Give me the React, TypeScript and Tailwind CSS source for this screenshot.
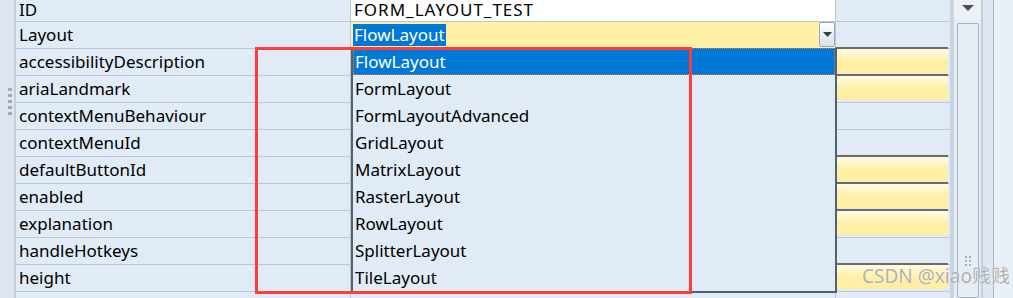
const props: { name: string; extra: "yellow" | "blue" | "none" }[] = [
  { name: "ID", extra: "blue" },
  { name: "Layout", extra: "blue" },
  { name: "accessibilityDescription", extra: "yellow" },
  { name: "ariaLandmark", extra: "yellow" },
  { name: "contextMenuBehaviour", extra: "blue" },
  { name: "contextMenuId", extra: "blue" },
  { name: "defaultButtonId", extra: "yellow" },
  { name: "enabled", extra: "yellow" },
  { name: "explanation", extra: "yellow" },
  { name: "handleHotkeys", extra: "blue" },
  { name: "height", extra: "yellow" },
  { name: "", extra: "blue" },
];

const layouts = [
  "FlowLayout",
  "FormLayout",
  "FormLayoutAdvanced",
  "GridLayout",
  "MatrixLayout",
  "RasterLayout",
  "RowLayout",
  "SplitterLayout",
  "TileLayout",
];

function ValueCell({ index }: { index: number }) {
  if (index === 0) {
    return (
      <div className="w-[485px] h-full bg-white border-l border-[#b9c7d4] pl-[3px] pt-[4px] flex items-center tracking-[1px]">
        FORM_LAYOUT_TEST
      </div>
    );
  }
  if (index === 1) {
    return (
      <div className="w-[485px] h-full bg-[#fff0a6] border-l border-[#b9c7d4] pl-[2px] flex items-center justify-between">
        <span className="bg-[#0078d7] text-white px-[1px] leading-[22px]">FlowLayout</span>
        <div className="w-[16px] h-[25px] mt-[-1px] border border-[#9aa8b8] rounded-[2px] bg-gradient-to-b from-white to-[#d8e0ea] flex items-center justify-center">
          <svg width="9" height="6" viewBox="0 0 9 6">
            <path d="M0 0 H9 L4.5 5 Z" fill="#2f3d4d" />
          </svg>
        </div>
      </div>
    );
  }
  return <div className="w-[485px] h-full border-l border-[#b9c7d4]" />;
}

function ExtraCell({ kind }: { kind: "yellow" | "blue" | "none" }) {
  if (kind === "yellow") {
    return (
      <div className="w-[113px] h-full border-l border-[#b9c7d4] border-t-2 border-t-[#6b6b6b] mt-[-2px] bg-gradient-to-b from-[#fffbe2] via-[#fff0a8] to-[#ffeea0]" />
    );
  }
  return <div className="w-[113px] h-full border-l border-[#b9c7d4]" />;
}

export default function App() {
  return (
    <div
      className="relative w-[1013px] h-[298px] overflow-hidden bg-[#e0ebf5] text-[17px] text-black flex"
      style={{ fontFamily: '"Segoe UI", "Noto Sans", "Open Sans", sans-serif' }}
    >
      {/* left gutter */}
      <div className="w-[16px] h-full bg-[#dde6ef] border-r-2 border-[#c3cfdb] flex flex-col items-center pt-[88px] gap-[3px] pl-[6px]">
        {[0, 1, 2, 3, 4].map((i) => (
          <div key={i} className="w-[4px] h-[3px] bg-[#9ba7b3] rounded-[1px]" />
        ))}
      </div>

      {/* grid */}
      <div className="w-[934px] h-full flex flex-col mt-[-5px]">
        {props.map((p, i) => (
          <div key={i} className="h-[27px] shrink-0 flex border-b border-[#b9c7d4]">
            <div className={"w-[334px] h-full pl-[3px] flex items-center whitespace-nowrap" + (i === 0 ? " pt-[4px]" : "")}>
              {p.name}
            </div>
            <ValueCell index={i} />
            <ExtraCell kind={p.extra} />
          </div>
        ))}
      </div>

      {/* scrollbar */}
      <div className="w-[63px] h-full flex">
        <div className="w-[31px] h-full bg-[#e4ecf5] border-l-4 border-[#c9d5e1] flex flex-col items-center">
          <div className="w-[27px] h-[20px] bg-[#eef2f7] flex items-start justify-center pt-[5px]">
            <svg width="12" height="7" viewBox="0 0 12 7">
              <path d="M0 0 H12 L6 6 Z" fill="#46535f" />
            </svg>
          </div>
          <div className="w-[22px] flex-1 mt-[3px] border border-[#a9b4bf] rounded-[2px] bg-[#e6edf5] flex items-center justify-center">
            <div className="grid grid-cols-2 gap-[2px] mt-[200px]">
              {[0, 1, 2, 3, 4, 5].map((i) => (
                <div key={i} className="w-[2px] h-[2px] bg-[#a6b0ba]" />
              ))}
            </div>
          </div>
        </div>
        <div className="w-[13px] h-full bg-[#dfe8f2] border-l-2 border-[#c4d0dc] border-r border-r-[#a3b6ca]" />
        <div className="flex-1 h-full bg-[#eaf0f7]" />
      </div>

      {/* dropdown list */}
      <div className="absolute left-[351px] top-[48px] w-[486px] h-[245px] bg-[#e0ebf5] border-x-2 border-b-2 border-[#50616f] flex flex-col">
        {layouts.map((l, i) => (
          <div
            key={l}
            className={
              i === 0
                ? "h-[27px] shrink-0 bg-[#0078d7] text-white border border-dotted border-[#e8822a] pl-[1px] flex items-center"
                : "h-[27px] shrink-0 pl-[2px] flex items-center"
            }
          >
            {l}
          </div>
        ))}
      </div>

      {/* red annotation box */}
      <div className="absolute left-[255px] top-[47px] w-[437px] h-[247px] border-[3px] border-[#ff3b3b] pointer-events-none" />

      {/* watermark */}
      <div
        className="absolute left-[862px] top-[262px] text-[19px] text-[#a2a2a2]/85 whitespace-nowrap"
        style={{ fontFamily: '"Noto Sans", "Noto Sans CJK SC", sans-serif', textShadow: "0 0 1px #ffffff" }}
      >
        CSDN @xiao贱贱
      </div>
    </div>
  );
}
